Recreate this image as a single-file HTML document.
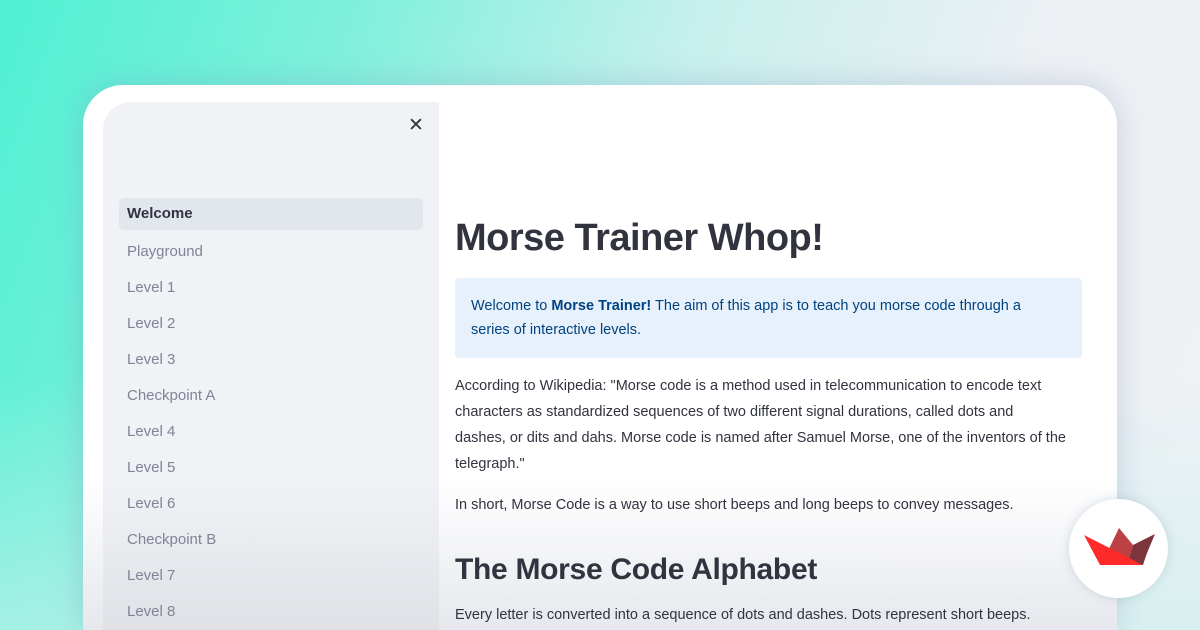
<!DOCTYPE html>
<html><head><meta charset="utf-8"><style>
*{margin:0;padding:0;box-sizing:border-box}
html,body{width:1200px;height:630px;overflow:hidden}
body{position:relative;font-family:"Liberation Sans",sans-serif;
background:linear-gradient(110deg,#4ff0d4 0%,#7ff0dc 25%,#c8f0ec 50%,#eef0f4 75%,#f0f1f5 100%);}
.bg2{position:absolute;left:0;top:0;width:1200px;height:630px;background:linear-gradient(0deg,rgba(200,240,236,0.6) 0%,rgba(200,240,236,0) 40%);}
.card{position:absolute;left:83px;top:85px;width:1034px;height:545px;background:linear-gradient(180deg,#fff 0%,#fff 72%,#e6e8ed 100%);border-radius:40px 40px 0 0;box-shadow:0 0 30px rgba(120,150,190,0.35);overflow:hidden}
.side{position:absolute;left:20px;top:17px;width:336px;height:528px;background:linear-gradient(180deg,#f0f2f6 0%,#f0f2f6 72%,#dfe1e6 100%);border-top-left-radius:28px}
.close{position:absolute;left:305px;top:12px;font-size:19px;color:#31333f}
.nav{position:absolute;left:16px;top:96px;width:304px}
.nav div{height:36px;line-height:36px;padding-left:8px;font-size:15px;color:#808495}
.nav .act{background:#e2e6ed;border-radius:5px;height:32px;line-height:32px;margin-bottom:4px;color:#31333f;font-weight:bold}
.main{position:absolute;left:372px;top:0;width:630px;color:#31333f}
h1{position:absolute;top:132px;font-size:38px;font-weight:bold;letter-spacing:-0.5px;white-space:nowrap}
.info{position:absolute;top:193px;width:627px;height:80px;background:#e7f1fb;border-radius:4px;color:#004280;font-size:14.5px;line-height:24px;padding:16px 16px}
.p{position:absolute;font-size:14.5px;line-height:26px;white-space:nowrap}
h2{position:absolute;top:468px;font-size:30px;font-weight:bold;letter-spacing:-0.3px;white-space:nowrap;color:#31333f}
.logo{position:absolute;left:1069px;top:499px;width:99px;height:99px;border-radius:50%;background:#fff;box-shadow:0 0 10px rgba(100,130,160,0.25)}
</style></head><body>
<div class="bg2"></div>
<div class="card">
 <div class="side">
  <div class="close">✕</div>
  <div class="nav">
   <div class="act">Welcome</div>
   <div>Playground</div><div>Level 1</div><div>Level 2</div><div>Level 3</div><div>Checkpoint A</div>
   <div>Level 4</div><div>Level 5</div><div>Level 6</div><div>Checkpoint B</div><div>Level 7</div><div>Level 8</div>
  </div>
 </div>
 <div class="main">
  <h1>Morse Trainer Whop!</h1>
  <div class="info">Welcome to <b>Morse Trainer!</b> The aim of this app is to teach you morse code through a<br>series of interactive levels.</div>
  <div class="p" style="top:288px">According to Wikipedia: "Morse code is a method used in telecommunication to encode text<br>characters as standardized sequences of two different signal durations, called dots and<br>dashes, or dits and dahs. Morse code is named after Samuel Morse, one of the inventors of the<br>telegraph."</div>
  <div class="p" style="top:407px">In short, Morse Code is a way to use short beeps and long beeps to convey messages.</div>
  <h2>The Morse Code Alphabet</h2>
  <div class="p" style="top:517px">Every letter is converted into a sequence of dots and dashes. Dots represent short beeps.</div>
 </div>
</div>
<div class="logo"><svg width="99" height="99" viewBox="0 0 99 99">
 <polygon points="50,29 64,46 58,66 37,56" fill="#bd4043"/>
 <polygon points="86,35 64,46 58,66 73,66" fill="#7d353b"/>
 <polygon points="84,35 74,66 70,66" fill="#7d353b"/>
 <polygon points="15,36 74,66 31,66" fill="#ff2b2b"/>
</svg></div>
</body></html>
